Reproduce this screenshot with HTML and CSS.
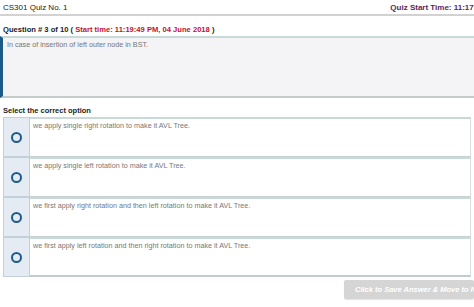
FILE: index.html
```html
<!DOCTYPE html>
<html>
<head>
<meta charset="utf-8">
<link rel="stylesheet" href="styles.css">
</head>
<body>
<div class="page">
  <div class="header">
    <span class="title">CS301 Quiz No. 1</span>
    <span class="start">Quiz Start Time: 11:17 PM</span>
  </div>
  <div class="qline">Question # 3 of 10 <span class="red">( <span class="rt">Start time: 11:19:49 PM, 04 June 2018</span> )</span></div>
  <div class="qbox">In case of insertion of left outer node in BST.</div>
  <div class="select">Select the correct option</div>
  <div class="options">
    <div class="opt"><div class="rcell"><span class="radio"></span></div><div class="tcell">we apply single right rotation to make it AVL Tree.</div></div>
    <div class="opt"><div class="rcell"><span class="radio"></span></div><div class="tcell">we apply single left rotation to make it AVL Tree.</div></div>
    <div class="opt"><div class="rcell"><span class="radio"></span></div><div class="tcell">we first apply right rotation and then left rotation to make it AVL Tree.</div></div>
    <div class="opt"><div class="rcell"><span class="radio"></span></div><div class="tcell">we first apply left rotation and then right rotation to make it AVL Tree.</div></div>
  </div>
  <div class="actions"><button class="save">Click to Save Answer &amp; Move to Next</button></div>
</div>
</body>
</html>
```
FILE: styles.css
```css
html, body {
  margin: 0;
  padding: 0;
  background: #ffffff;
}
body {
  font-family: "Liberation Sans", Arial, sans-serif;
  width: 474px;
  height: 307px;
  overflow: hidden;
}
.page {
  width: 474px;
}
.header {
  height: 14px;
  display: flex;
  justify-content: space-between;
  align-items: center;
  border-bottom: 2px solid #d2d2d2;
  white-space: nowrap;
  overflow: hidden;
  padding-left: 3px;
}
.title {
  font-size: 8px;
  color: #222;
}
.start {
  font-size: 8px;
  font-weight: bold;
  color: #5b1f5b;
  margin-right: -14px;
}
.qline {
  margin-top: 8px;
  padding-left: 3px;
  font-size: 7.6px;
  font-weight: bold;
  color: #222;
  height: 11px;
  line-height: 11px;
}
.red {
  color: #222;
}
.rt {
  color: #c8102e;
}
.qbox {
  margin-top: 1px;
  height: 53px;
  background: #f4f3f5;
  border-top: 2px solid #c9d9d8;
  border-bottom: 2px solid #c6cccc;
  border-left: 3px solid #1d5a86;
  padding: 2px 4px 3px;
  font-size: 7.2px;
  color: #777;
}
.select {
  margin-top: 8px;
  padding-left: 3px;
  font-size: 7.5px;
  font-weight: bold;
  color: #222;
  height: 10px;
  line-height: 10px;
}
.options {
  margin-top: 1px;
  padding-left: 3px;
  padding-right: 3px;
  display: flex;
  flex-direction: column;
}
.opt {
  display: flex;
  height: 40px;
}
.rcell {
  width: 27px;
  background: #e5ebf3;
  border: 1px solid #c3cfda;
  display: flex;
  align-items: center;
  justify-content: center;
  box-sizing: border-box;
}
.radio {
  width: 7px;
  height: 7px;
  border: 2px solid #1e5b8a;
  border-radius: 50%;
  box-sizing: content-box;
}
.tcell {
  flex: 1;
  background: #fff;
  border-top: 2px solid #c9d9d8;
  border-bottom: 1px solid #c9d2d2;
  border-right: 1px solid #d6dede;
  padding: 2px 3px;
  font-size: 7.2px;
  color: #777;
  box-sizing: border-box;
}
.opt:last-child .tcell {
  border-bottom: 2px solid #c2cccc;
}
.actions {
  display: flex;
  justify-content: flex-end;
  margin-top: 3px;
}
.save {
  width: 130px;
  height: 19px;
  background: #d5d5d5;
  border: none;
  border-radius: 2px;
  color: #ffffff;
  font-family: "Liberation Sans", Arial, sans-serif;
  font-size: 7.5px;
  font-weight: bold;
  font-style: italic;
  text-align: left;
  padding: 0 0 0 11px;
  white-space: nowrap;
  overflow: hidden;
  box-shadow: 0 1px 1px #e4e4e4;
}
```
